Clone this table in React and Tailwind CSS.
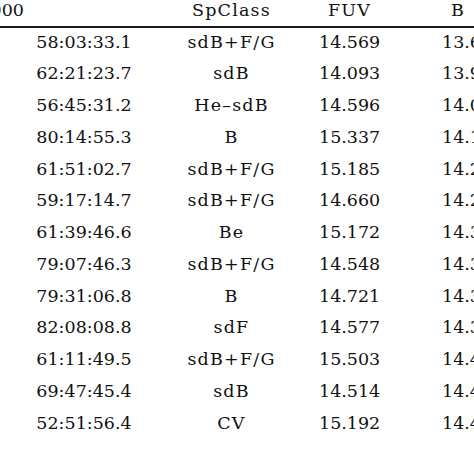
import React from 'react'

const rows = [
  ['58:03:33.1', 'sdB+F/G', '14.569', '13.641'],
  ['62:21:23.7', 'sdB', '14.093', '13.912'],
  ['56:45:31.2', 'He–sdB', '14.596', '14.028'],
  ['80:14:55.3', 'B', '15.337', '14.153'],
  ['61:51:02.7', 'sdB+F/G', '15.185', '14.207'],
  ['59:17:14.7', 'sdB+F/G', '14.660', '14.236'],
  ['61:39:46.6', 'Be', '15.172', '14.318'],
  ['79:07:46.3', 'sdB+F/G', '14.548', '14.331'],
  ['79:31:06.8', 'B', '14.721', '14.352'],
  ['82:08:08.8', 'sdF', '14.577', '14.374'],
  ['61:11:49.5', 'sdB+F/G', '15.503', '14.405'],
  ['69:47:45.4', 'sdB', '14.514', '14.427'],
  ['52:51:56.4', 'CV', '15.192', '14.449'],
]

export default function App() {
  return (
    <div className="w-[474px] h-[474px] overflow-hidden bg-white text-[#111] text-[17.5px] leading-none" style={{ fontFamily: '"DejaVu Serif", serif' }}>
      {/* header */}
      <div className="flex h-[26px] items-center pb-[4px] whitespace-nowrap">
        <div className="w-[24px] shrink-0 flex justify-end overflow-hidden">J2000</div>
        <div className="w-[120px] shrink-0" />
        <div className="w-[175px] shrink-0 text-center tracking-[1.2px]">SpClass</div>
        <div className="w-[61px] shrink-0 text-center tracking-[1.2px]">FUV</div>
        <div className="pl-[71px] shrink-0 tracking-[1.2px]">B</div>
      </div>
      <div className="h-[2px] bg-[#1a1a1a]" />

      {/* body */}
      {rows.map((r, i) => (
        <div key={i} className="flex h-[31.75px] items-center pb-[3px] whitespace-nowrap">
          <div className="w-[24px] shrink-0" />
          <div className="w-[120px] shrink-0 text-center">{r[0]}</div>
          <div className="w-[175px] shrink-0 text-center tracking-[1.2px]">{r[1]}</div>
          <div className="w-[61px] shrink-0 text-center">{r[2]}</div>
          <div className="pl-[62px] shrink-0">{r[3]}</div>
        </div>
      ))}
    </div>
  )
}
